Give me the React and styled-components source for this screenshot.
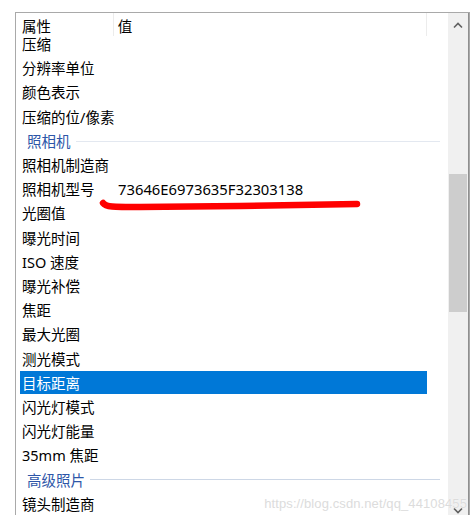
import React from 'react';
import styled, { createGlobalStyle } from 'styled-components';

const GlobalStyle = createGlobalStyle`
  html, body {
    margin: 0;
    padding: 0;
    background: #ffffff;
    overflow: hidden;
  }
  body {
    font-family: "Noto Sans", "Noto Sans CJK SC", sans-serif;
  }
`;

// 属性窗口外框
const Frame = styled.div`
  position: relative;
  margin: 12px 0 0 15px;
  width: 453px;
  height: 509px;
  border: 1px solid #a9a9a9;
  border-bottom: none;
  display: flex;
  overflow: hidden;
`;

const ListArea = styled.div`
  flex: 1;
  padding-left: 4px;
  display: flex;
  flex-direction: column;
`;

const Header = styled.div`
  display: flex;
  height: 19px;
  width: 407px;
`;

const HeaderCell = styled.div`
  width: ${(p) => p.$w}px;
  height: 23px;
  padding: 4px 0 0 ${(p) => p.$pad}px;
  box-sizing: border-box;
  font-size: 14.5px;
  line-height: 18px;
  color: #000;
  border-right: 1px solid ${(p) => (p.$divider ? '#ececec' : 'transparent')};
`;

const Row = styled.div`
  display: flex;
  align-items: center;
  width: 407px;
  height: 24.2px;
  box-sizing: border-box;
  border-bottom: 1px solid transparent;
  background-clip: padding-box;
  background-color: ${(p) => (p.$selected ? '#0078d7' : 'transparent')};
  color: ${(p) => (p.$selected ? '#ffffff' : '#000000')};
  font-size: 14.5px;
  white-space: nowrap;
`;

const NameCell = styled.div`
  width: 96px;
  padding-left: 2px;
  flex-shrink: 0;
`;

const ValueCell = styled.div`
  flex: 1;
  font-size: 14.8px;
`;

const GroupRow = styled.div`
  display: flex;
  align-items: center;
  height: 24.2px;
  width: 420px;
  padding-left: 7px;
  box-sizing: border-box;
  gap: 5px;
`;

const GroupTitle = styled.span`
  color: #2d56a8;
  font-size: 14.5px;
  white-space: nowrap;
`;

const GroupLine = styled.div`
  flex: 1;
  height: 1px;
  background: ${(p) => p.$color || '#e3e8f0'};
  margin-top: 1px;
`;

// 滚动条
const ScrollBar = styled.div`
  width: 20px;
  background: #f0f0f0;
  display: flex;
  flex-direction: column;
  border-right: 1px solid #8f8f8f;
`;

const ArrowButton = styled.div`
  height: 24px;
  display: flex;
  align-items: center;
  justify-content: center;
  flex-shrink: 0;
`;

const Track = styled.div`
  flex: 1;
  padding-top: 137px;
  display: flex;
  flex-direction: column;
  align-items: center;
`;

const Thumb = styled.div`
  width: 18px;
  height: 138px;
  background: #cdcdcd;
`;

const Scribble = styled.svg`
  position: absolute;
  left: -16px;
  top: -13px;
  pointer-events: none;
`;

const Watermark = styled.div`
  position: absolute;
  right: 2px;
  bottom: 11px;
  font-family: "Liberation Sans", Arial, sans-serif;
  font-size: 13px;
  color: #dcdcdc;
  letter-spacing: 0.1px;
  text-shadow: 0 0 1px #ffffff;
  pointer-events: none;
`;

const Chevron = ({ down }) => (
  <svg width="10" height="7" viewBox="0 0 10 7">
    <path
      d={down ? 'M1 1.5 L5 5.5 L9 1.5' : 'M1 5.5 L5 1.5 L9 5.5'}
      fill="none"
      stroke="#606060"
      strokeWidth="1.6"
    />
  </svg>
);

const items = [
  { name: '压缩' },
  { name: '分辨率单位' },
  { name: '颜色表示' },
  { name: '压缩的位/像素' },
  { group: '照相机' },
  { name: '照相机制造商' },
  { name: '照相机型号', value: '73646E6973635F32303138' },
  { name: '光圈值' },
  { name: '曝光时间' },
  { name: 'ISO 速度' },
  { name: '曝光补偿' },
  { name: '焦距' },
  { name: '最大光圈' },
  { name: '测光模式' },
  { name: '目标距离', selected: true },
  { name: '闪光灯模式' },
  { name: '闪光灯能量' },
  { name: '35mm 焦距' },
  { group: '高级照片', line: '#cdd7e6' },
  { name: '镜头制造商' },
];

const App = () => (
  <>
    <GlobalStyle />
    <Frame>
      <ListArea>
        <Header>
          <HeaderCell $w={94} $pad={2} $divider>属性</HeaderCell>
          <HeaderCell $w={314} $pad={4} $divider>值</HeaderCell>
        </Header>
        {items.map((it, i) =>
          it.group ? (
            <GroupRow key={i}>
              <GroupTitle>{it.group}</GroupTitle>
              <GroupLine $color={it.line} />
            </GroupRow>
          ) : (
            <Row key={i} $selected={it.selected}>
              <NameCell>{it.name}</NameCell>
              <ValueCell>{it.value}</ValueCell>
            </Row>
          )
        )}
      </ListArea>
      <ScrollBar>
        <ArrowButton>
          <Chevron />
        </ArrowButton>
        <Track>
          <Thumb />
        </Track>
        <ArrowButton>
          <Chevron down />
        </ArrowButton>
      </ScrollBar>
      <Scribble width="474" height="515" viewBox="0 0 474 515">
        <path
          d="M103 203 C106 207, 112 207, 140 207 L240 206 L357 204"
          fill="none"
          stroke="#ff0000"
          strokeWidth="6.5"
          strokeLinecap="round"
        />
      </Scribble>
      <Watermark>https://blog.csdn.net/qq_44108455</Watermark>
    </Frame>
  </>
);

export default App;
